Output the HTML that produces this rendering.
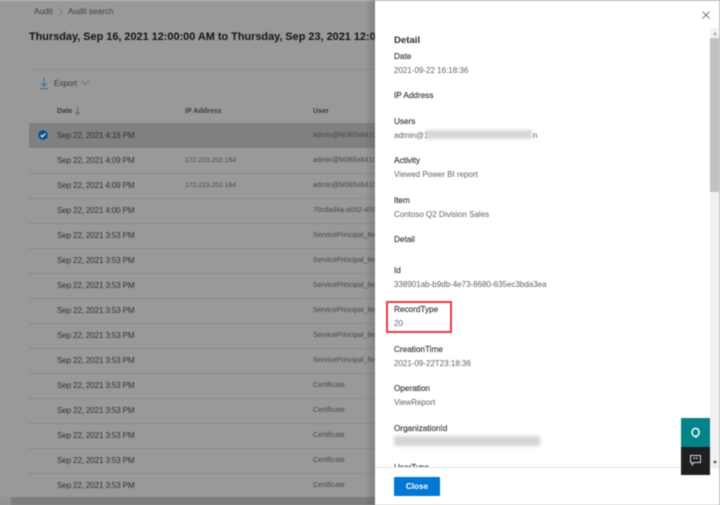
<!DOCTYPE html>
<html><head><meta charset="utf-8"><style>
html,body{margin:0;padding:0;width:720px;height:505px;overflow:hidden;background:#999}
body{position:relative;font-family:"Liberation Sans",sans-serif}
.t{position:absolute;white-space:nowrap;line-height:12px;transform-origin:0 50%;margin-top:1px}
.bl{position:absolute}
#wrap{position:absolute;left:0;top:0;width:720px;height:505px;overflow:hidden;filter:blur(.4px)}
.d{font-size:8.2px;letter-spacing:-.2px;color:#333;left:57px}
.i{font-size:6.8px;color:#474747;left:185px}
.u{font-size:7.05px;color:#474747;left:313px}
.l{font-size:8.2px;color:#3a3a3a;left:394px;-webkit-text-stroke:.15px #3a3a3a}
.v{font-size:8px;color:#626262;left:394px}
</style></head><body><div id="wrap">
<div class="bl" style="left:0;top:0;width:720px;height:1px;background:#bdbdbd"></div>

<div class="t" style="left:34px;top:5px;font-size:8.2px;color:#3f3f3f">Audit</div>
<svg class="bl" style="left:58px;top:8px" width="6" height="8"><path d="M1 .5L4.500 4 1 7.500" fill="none" stroke="#777" stroke-width=".7"/></svg>
<div class="t" style="left:68px;top:5px;font-size:8.2px;color:#3f3f3f">Audit search</div>
<div class="t" style="left:29px;top:30px;font-size:10.9px;font-weight:bold;color:#151515">Thursday, Sep 16, 2021 12:00:00 AM to Thursday, Sep 23, 2021 12:00:00 AM</div>

<div class="bl" style="left:35px;top:69px;width:340px;height:1px;background:#8c8c8c"></div>
<svg class="bl" style="left:39px;top:77px" width="10" height="13"><path d="M5 .5V9M1.800 6L5 9.200 8.200 6M.5 11.700H9.500" fill="none" stroke="#2a6596" stroke-width=".8"/></svg>
<div class="t" style="left:54px;top:77px;font-size:8px;color:#3a3a3a">Export</div>
<svg class="bl" style="left:80.500px;top:80px" width="9" height="6"><path d="M1 1L4.500 4.500 8 1" fill="none" stroke="#666" stroke-width=".7"/></svg>

<div class="t" style="left:57px;top:104px;font-size:7.1px;font-weight:bold;color:#3d3d3d">Date</div>
<svg class="bl" style="left:74px;top:106px" width="7" height="10"><path d="M3.500 .5V8.500M1 6L3.500 8.500 6 6" fill="none" stroke="#555" stroke-width=".7"/></svg>
<div class="t" style="left:185px;top:104px;font-size:7.1px;font-weight:bold;color:#3d3d3d">IP Address</div>
<div class="t" style="left:313px;top:104px;font-size:7.1px;font-weight:bold;color:#3d3d3d">User</div>

<div class="bl" style="left:29px;top:123px;width:346px;height:25px;background:#808080"></div>
<svg class="bl" style="left:38px;top:130px" width="10" height="10"><circle cx="5" cy="5" r="4.800" fill="#07518c"/><path d="M2.700 5.200L4.300 6.800 7.400 3.500" fill="none" stroke="#fff" stroke-width="1.100"/></svg>

<div class="t d" style="top:129px">Sep 22, 2021 4:18 PM</div><div class="t u" style="top:129px">admin@M365x6410</div>
<div class="t d" style="top:154px">Sep 22, 2021 4:09 PM</div><div class="t i" style="top:154px">172.223.202.164</div><div class="t u" style="top:154px">admin@M365x6410</div>
<div class="t d" style="top:179px">Sep 22, 2021 4:09 PM</div><div class="t i" style="top:179px">172.223.202.164</div><div class="t u" style="top:179px">admin@M365x6410</div>
<div class="t d" style="top:204px">Sep 22, 2021 4:00 PM</div><div class="t u" style="top:204px">70cdad4a-a032-459</div>
<div class="t d" style="top:229px">Sep 22, 2021 3:53 PM</div><div class="t u" style="top:229px">ServicePrincipal_8ee</div>
<div class="t d" style="top:254px">Sep 22, 2021 3:53 PM</div><div class="t u" style="top:254px">ServicePrincipal_8ee</div>
<div class="t d" style="top:279px">Sep 22, 2021 3:53 PM</div><div class="t u" style="top:279px">ServicePrincipal_8ee</div>
<div class="t d" style="top:304px">Sep 22, 2021 3:53 PM</div><div class="t u" style="top:304px">ServicePrincipal_8ee</div>
<div class="t d" style="top:329px">Sep 22, 2021 3:53 PM</div><div class="t u" style="top:329px">ServicePrincipal_8ee</div>
<div class="t d" style="top:354px">Sep 22, 2021 3:53 PM</div><div class="t u" style="top:354px">ServicePrincipal_8ee</div>
<div class="t d" style="top:379px">Sep 22, 2021 3:53 PM</div><div class="t u" style="top:379px">Certificate</div>
<div class="t d" style="top:404px">Sep 22, 2021 3:53 PM</div><div class="t u" style="top:404px">Certificate</div>
<div class="t d" style="top:429px">Sep 22, 2021 3:53 PM</div><div class="t u" style="top:429px">Certificate</div>
<div class="t d" style="top:454px">Sep 22, 2021 3:53 PM</div><div class="t u" style="top:454px">Certificate</div>
<div class="t d" style="top:479px">Sep 22, 2021 3:53 PM</div><div class="t u" style="top:479px">Certificate</div>

<div class="bl" style="left:29px;top:173px;width:346px;height:1px;background:#8a8a8a"></div>
<div class="bl" style="left:29px;top:198px;width:346px;height:1px;background:#8a8a8a"></div>
<div class="bl" style="left:29px;top:223px;width:346px;height:1px;background:#8a8a8a"></div>
<div class="bl" style="left:29px;top:248px;width:346px;height:1px;background:#8a8a8a"></div>
<div class="bl" style="left:29px;top:273px;width:346px;height:1px;background:#8a8a8a"></div>
<div class="bl" style="left:29px;top:298px;width:346px;height:1px;background:#8a8a8a"></div>
<div class="bl" style="left:29px;top:323px;width:346px;height:1px;background:#8a8a8a"></div>
<div class="bl" style="left:29px;top:348px;width:346px;height:1px;background:#8a8a8a"></div>
<div class="bl" style="left:29px;top:373px;width:346px;height:1px;background:#8a8a8a"></div>
<div class="bl" style="left:29px;top:398px;width:346px;height:1px;background:#8a8a8a"></div>
<div class="bl" style="left:29px;top:423px;width:346px;height:1px;background:#8a8a8a"></div>
<div class="bl" style="left:29px;top:448px;width:346px;height:1px;background:#8a8a8a"></div>
<div class="bl" style="left:29px;top:473px;width:346px;height:1px;background:#8a8a8a"></div>

<div class="bl" style="left:0;top:497px;width:375px;height:8px;background:#7d7d7d"></div>
<div class="bl" style="left:0;top:497px;width:11px;height:8px;background:#939393"></div>
<div class="bl" style="left:365px;top:0;width:10px;height:505px;background:linear-gradient(90deg,rgba(70,70,70,0),rgba(70,70,70,.28))"></div>

<div class="bl" style="left:375px;top:0;width:345px;height:505px;background:#fff"></div>
<div class="bl" style="left:375px;top:0;width:345px;height:1px;background:#d0d0d0"></div>
<div class="bl" style="left:375px;top:504px;width:345px;height:1px;background:#c4c4c4"></div>
<div class="bl" style="left:719px;top:0;width:1px;height:505px;background:#d8d8d8"></div>
<svg class="bl" style="left:701px;top:10px" width="10" height="10"><path d="M1.500 1.500L8.500 8.500M8.500 1.500L1.500 8.500" stroke="#555" stroke-width=".8" fill="none"/></svg>

<div class="bl" style="left:710px;top:28px;width:9px;height:439px;background:#f1f1f1"></div>
<div class="bl" style="left:710px;top:38px;width:9px;height:154px;background:#c1c1c1"></div>
<div class="bl" style="left:712.500px;top:32px;width:0;height:0;border-left:2.500px solid transparent;border-right:2.500px solid transparent;border-bottom:3px solid #a3a3a3"></div>
<div class="bl" style="left:712.500px;top:461px;width:0;height:0;border-left:2.500px solid transparent;border-right:2.500px solid transparent;border-top:3px solid #505050"></div>

<div class="t" style="left:394px;top:34px;font-size:9.600px;font-weight:bold;color:#2f2f2f">Detail</div>
<div class="t l" style="top:50px">Date</div>
<div class="t v" style="top:64px">2021-09-22 16:18:36</div>
<div class="t l" style="top:89px">IP Address</div>
<div class="t l" style="top:115px">Users</div>
<div class="t v" style="top:129px">admin@1</div>
<div class="bl" style="left:426px;top:130px;width:106px;height:9px;background:#d6d6d6;filter:blur(1.500px)"></div>
<div class="t v" style="left:533px;top:129px">n</div>
<div class="t l" style="top:154px">Activity</div>
<div class="t v" style="top:168px">Viewed Power BI report</div>
<div class="t l" style="top:194px">Item</div>
<div class="t v" style="top:208px">Contoso Q2 Division Sales</div>
<div class="t l" style="top:233px">Detail</div>
<div class="t l" style="top:264px">Id</div>
<div class="t v" style="top:278px">338901ab-b9db-4e73-8680-635ec3bda3ea</div>
<div class="t l" style="top:303px">RecordType</div>
<div class="t v" style="top:317px">20</div>
<div class="bl" style="left:386px;top:301px;width:62px;height:28px;border:2px solid #ea3c46"></div>
<div class="t l" style="top:343px">CreationTime</div>
<div class="t v" style="top:357px">2021-09-22T23:18:36</div>
<div class="t l" style="top:382px">Operation</div>
<div class="t v" style="top:396px">ViewReport</div>
<div class="t l" style="top:422px">OrganizationId</div>
<div class="bl" style="left:394px;top:436px;width:146px;height:10px;background:#d4d4d4;filter:blur(1.800px)"></div>
<div class="t l" style="top:461px">UserType</div>

<div class="bl" style="left:375px;top:467px;width:344px;height:37px;background:#fff;border-top:1px solid #e6e6e6"></div>
<div class="bl" style="left:394px;top:477px;width:46px;height:19px;background:#0078d4;border-radius:1px"></div>
<div class="t" style="left:394px;top:480px;width:46px;text-align:center;font-size:8.200px;font-weight:bold;color:#fff">Close</div>

<div class="bl" style="left:681px;top:418px;width:29px;height:29px;background:#038387"></div>
<svg class="bl" style="left:690px;top:426px" width="11" height="13"><path d="M7.700 9.500A3.500 4 0 1 1 7.700 3.200A3.500 4 0 0 1 7.700 9.500ZM5.500 10.500L6.500 11.700" fill="none" stroke="#fff" stroke-width="1.500"/></svg>
<div class="bl" style="left:681px;top:447px;width:29px;height:28px;background:#1f1f1f"></div>
<svg class="bl" style="left:689px;top:454px" width="13" height="13"><path d="M1.500 1.500H11.500V8.500H5L3 10.800V8.500H1.500Z" fill="none" stroke="#d8d4e8" stroke-width="1"/><path d="M4.500 4.200H5.800M7.200 4.200H8.500" stroke="#fff" stroke-width="1.300"/></svg>
</div></body></html>
